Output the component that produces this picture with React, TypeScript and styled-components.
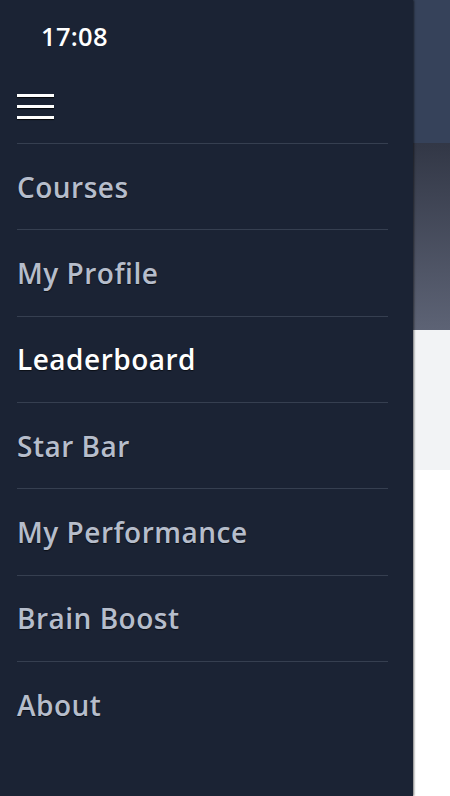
import React from "react";
import styled, { createGlobalStyle } from "styled-components";

const Global = createGlobalStyle`
  html, body { margin: 0; padding: 0; background: #ffffff; }
  body { font-family: "Open Sans", "Noto Sans", sans-serif; -webkit-font-smoothing: antialiased; }
  * { box-sizing: border-box; }
`;

const Screen = styled.div`
  width: 450px;
  height: 796px;
  display: flex;
  overflow: hidden;
  position: relative;
`;

const Drawer = styled.nav`
  width: 413px;
  flex: none;
  height: 100%;
  background: #1b2334;
  padding: 0 25px 0 17px;
  display: flex;
  flex-direction: column;
  box-shadow: 1px 0 2px rgba(0, 0, 0, 0.55);
  position: relative;
  z-index: 1;
`;

const StatusBar = styled.div`
  height: 71px;
  display: flex;
  align-items: center;
  padding-left: 24px;
  color: #ffffff;
  font-size: 25.5px;
  font-weight: 600;
  letter-spacing: 0.3px;
`;

const MenuBar = styled.div`
  height: 72px;
  display: flex;
  align-items: center;
`;

const Burger = styled.div`
  width: 37px;
  display: flex;
  flex-direction: column;
  gap: 8px;
  margin-top: -2px;
`;

const BurgerLine = styled.span`
  display: block;
  height: 3px;
  background: #ffffff;
  box-shadow: 0 1px 1px rgba(0, 0, 0, 0.8);
`;

const List = styled.ul`
  list-style: none;
  margin: 0;
  padding: 0;
`;

const Item = styled.li<{ $active?: boolean }>`
  height: 86.33px;
  border-top: 1.5px solid #363f50;
  display: flex;
  align-items: center;
  font-size: 28px;
  font-weight: 600;
  letter-spacing: 0.5px;
  color: ${(p) => (p.$active ? "#ffffff" : "#b6bdcb")};
  text-shadow: 0 1px 1px rgba(0, 0, 0, 0.6);
`;

const Backdrop = styled.div`
  flex: 1;
  display: flex;
  flex-direction: column;
`;

const TopBar = styled.div`
  height: 143px;
  background: #36425a;
`;

const Hero = styled.div`
  height: 187px;
  background: linear-gradient(180deg, #323746 0%, #5d6375 100%);
`;

const Band = styled.div`
  height: 140px;
  background: #f2f3f5;
`;

const Rest = styled.div`
  flex: 1;
  background: #ffffff;
`;

const items = [
  "Courses",
  "My Profile",
  "Leaderboard",
  "Star Bar",
  "My Performance",
  "Brain Boost",
  "About",
];

export default function App() {
  return (
    <>
      <Global />
      <Screen>
        <Drawer>
          <StatusBar>17:08</StatusBar>
          <MenuBar>
            <Burger>
              <BurgerLine />
              <BurgerLine />
              <BurgerLine />
            </Burger>
          </MenuBar>
          <List>
            {items.map((label) => (
              <Item key={label} $active={label === "Leaderboard"}>
                {label}
              </Item>
            ))}
          </List>
        </Drawer>
        <Backdrop>
          <TopBar />
          <Hero />
          <Band />
          <Rest />
        </Backdrop>
      </Screen>
    </>
  );
}
